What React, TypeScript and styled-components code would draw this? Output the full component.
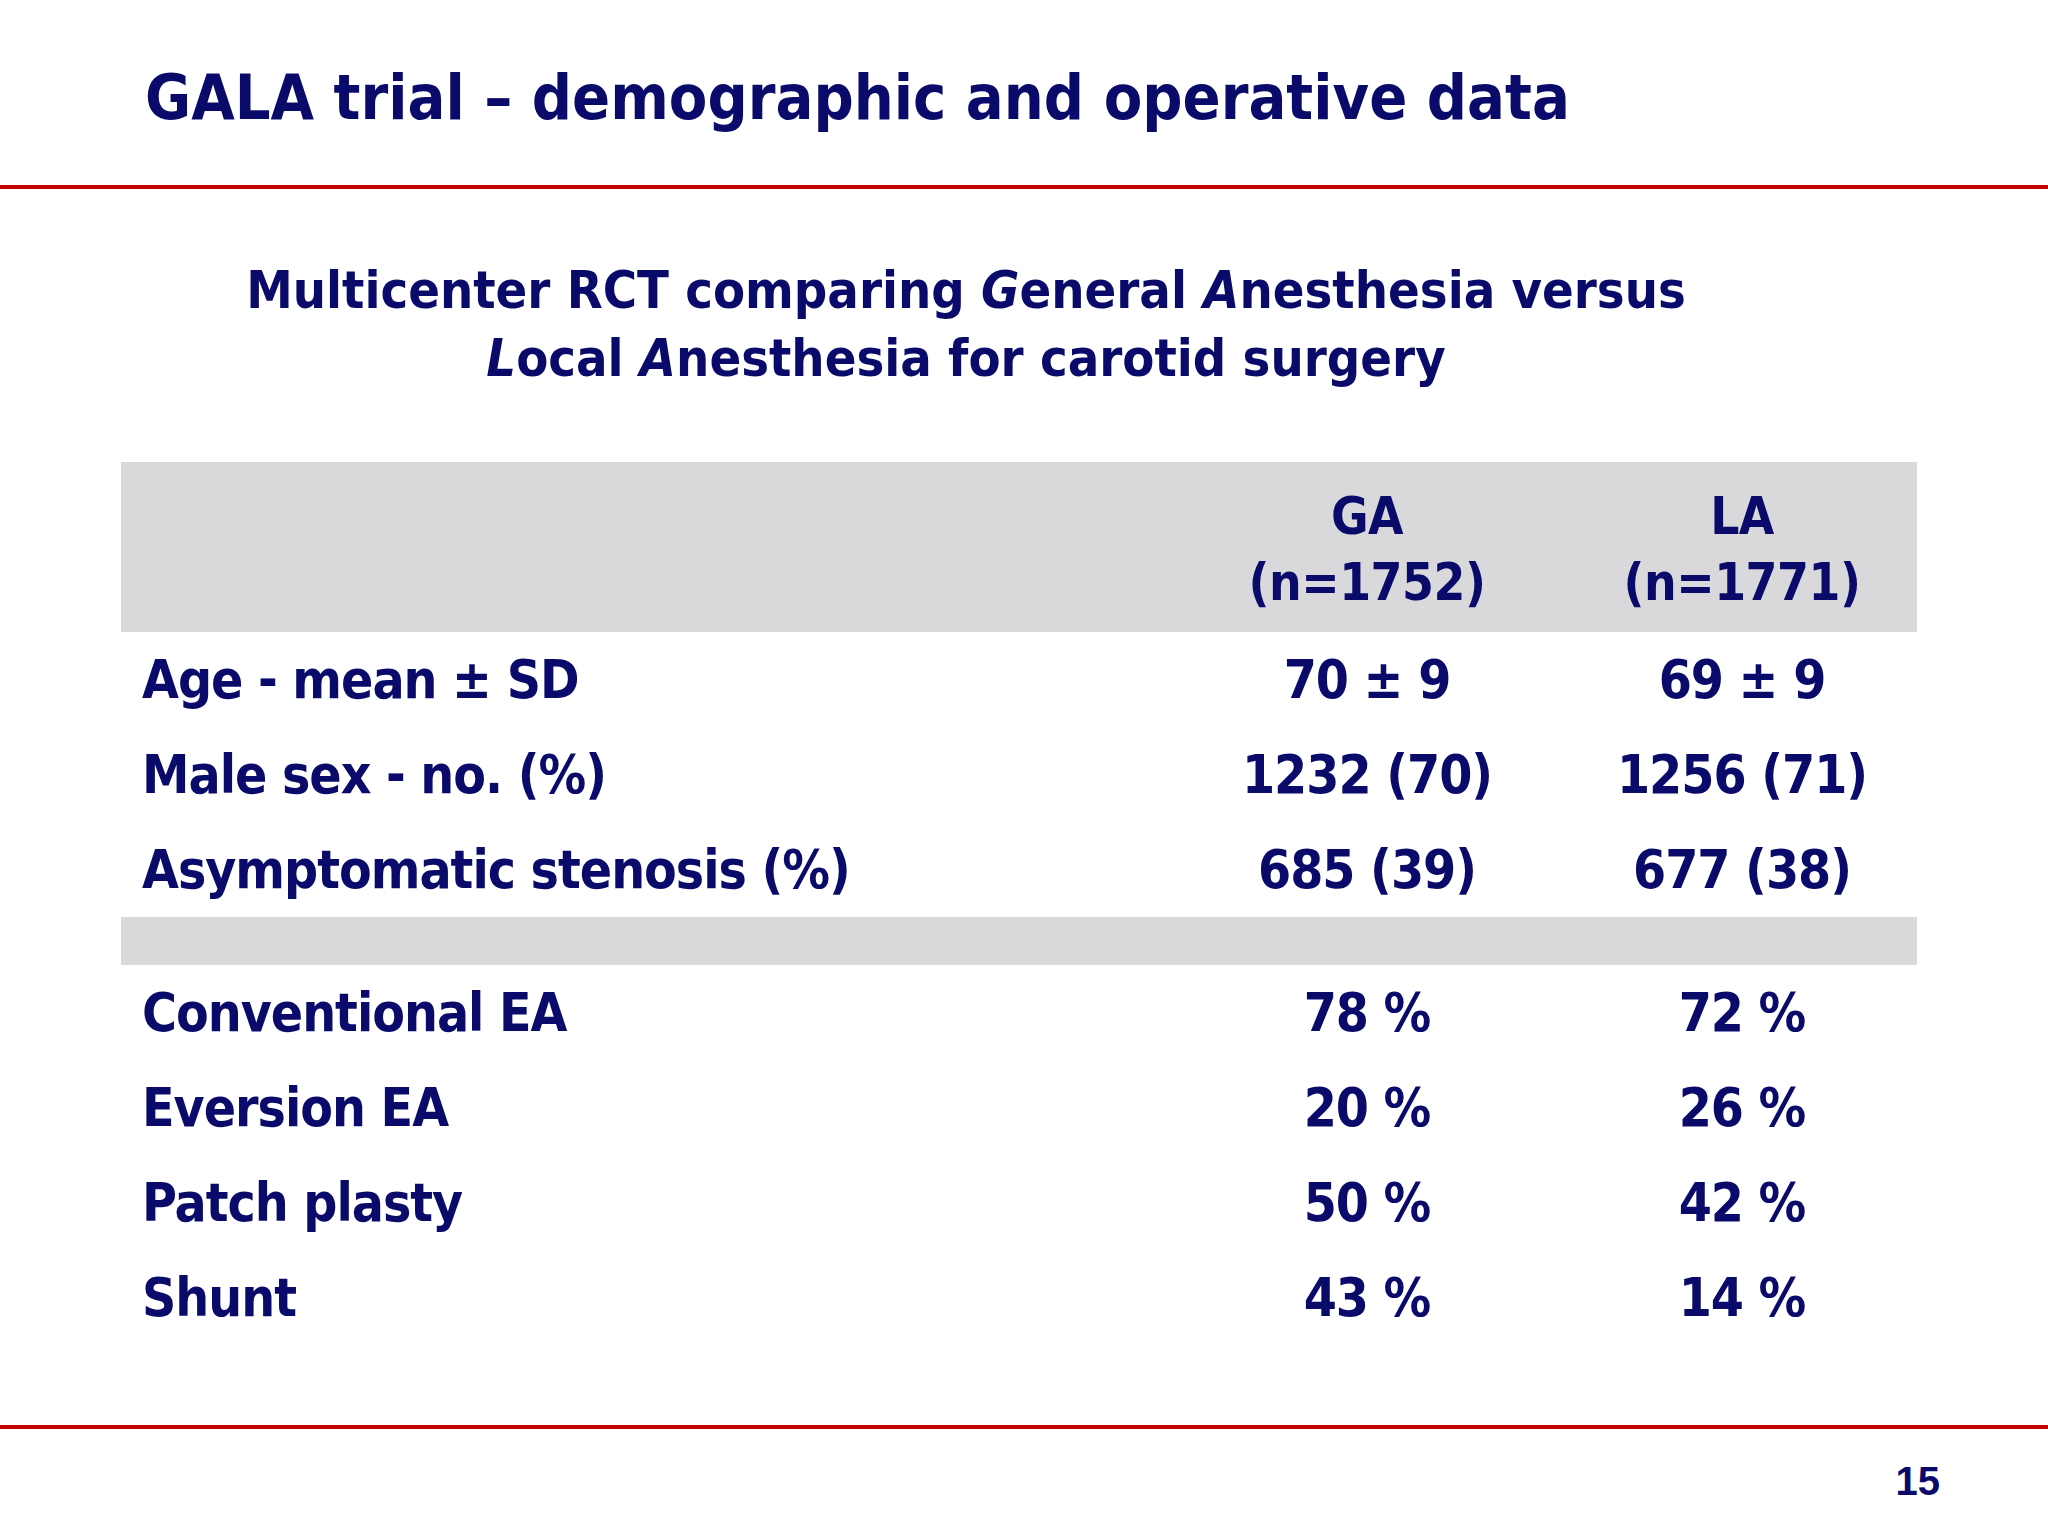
import React from "react";
import styled, { createGlobalStyle } from "styled-components";

const NAVY = "#0a0a6a";
const RED = "#c80000";
const GREY = "#d9d9dc";

const Global = createGlobalStyle`
  html, body { margin: 0; padding: 0; background: #fff; }
  #root { width: 2048px; height: 1536px; }
`;

const Slide = styled.div`
  width: 2048px;
  height: 1536px;
  display: flex;
  flex-direction: column;
  background: #fff;
  color: ${NAVY};
  font-family: "DejaVu Sans Condensed", "DejaVu Sans", sans-serif;
  font-weight: 700;
  overflow: hidden;
`;

const Header = styled.header`
  height: 185px;
  box-sizing: border-box;
  padding: 58px 0 0 145px;
`;

const Title = styled.h1`
  margin: 0;
  font-size: 62.5px;
  line-height: 80px;
  font-weight: 700;
  white-space: nowrap;
`;

const Rule = styled.div`
  height: 4px;
  background: ${RED};
  flex-shrink: 0;
`;

const Subtitle = styled.p`
  margin: 67px 0 0;
  width: 1932px;
  text-align: center;
  font-size: 52px;
  line-height: 68px;
`;

const Em = styled.em`
  font-style: italic;
`;

const Table = styled.div`
  margin: 70px 0 0 121px;
  width: 1796px;
  display: flex;
  flex-direction: column;
`;

const Row = styled.div`
  display: grid;
  grid-template-columns: 1046px 400px 350px;
  height: 95px;
  box-sizing: border-box;
  padding-top: 1px;
  font-size: 53px;
  letter-spacing: -1px;
  line-height: 94px;
  white-space: nowrap;
`;

const HeadRow = styled(Row)`
  height: auto;
  background: ${GREY};
  padding: 22px 0 16px;
  font-size: 51px;
  letter-spacing: -0.5px;
  line-height: 66px;
`;

const Band = styled.div`
  height: 48px;
  background: ${GREY};
`;

const Label = styled.div`
  padding-left: 21px;
`;

const Cell = styled.div`
  text-align: center;
`;

const FooterRule = styled(Rule)`
  margin-top: 80px;
`;

const PageNum = styled.div`
  margin-top: 32px;
  padding-right: 108px;
  text-align: right;
  font-family: "Liberation Sans", Arial, sans-serif;
  font-size: 40px;
  line-height: 40px;
`;

type Line = [string, string, string];

const patient: Line[] = [
  ["Age - mean ± SD", "70 ± 9", "69 ± 9"],
  ["Male sex - no. (%)", "1232 (70)", "1256 (71)"],
  ["Asymptomatic stenosis (%)", "685 (39)", "677 (38)"],
];

const operative: Line[] = [
  ["Conventional EA", "78 %", "72 %"],
  ["Eversion EA", "20 %", "26 %"],
  ["Patch plasty", "50 %", "42 %"],
  ["Shunt", "43 %", "14 %"],
];

const DataRow = ({ line }: { line: Line }) => (
  <Row>
    <Label>{line[0]}</Label>
    <Cell>{line[1]}</Cell>
    <Cell>{line[2]}</Cell>
  </Row>
);

export default function App() {
  return (
    <>
      <Global />
      <Slide>
        <Header>
          <Title>GALA trial – demographic and operative data</Title>
        </Header>
        <Rule />
        <Subtitle>
          Multicenter RCT comparing <Em>G</Em>eneral <Em>A</Em>nesthesia versus
          <br />
          <Em>L</Em>ocal <Em>A</Em>nesthesia for carotid surgery
        </Subtitle>
        <Table>
          <HeadRow>
            <Label />
            <Cell>
              GA
              <br />
              (n=1752)
            </Cell>
            <Cell>
              LA
              <br />
              (n=1771)
            </Cell>
          </HeadRow>
          {patient.map((l) => (
            <DataRow key={l[0]} line={l} />
          ))}
          <Band />
          {operative.map((l) => (
            <DataRow key={l[0]} line={l} />
          ))}
        </Table>
        <FooterRule />
        <PageNum>15</PageNum>
      </Slide>
    </>
  );
}
